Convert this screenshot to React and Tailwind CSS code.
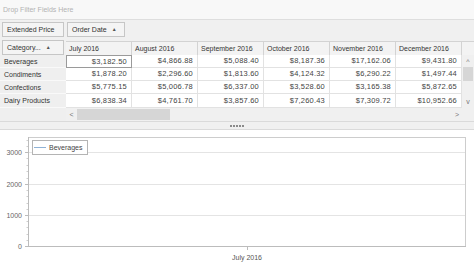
import React from 'react';

const months = ['July 2016', 'August 2016', 'September 2016', 'October 2016', 'November 2016', 'December 2016'];

const rows = [
    { name: 'Beverages', values: ['$3,182.50', '$4,866.88', '$5,088.40', '$8,187.36', '$17,162.06', '$9,431.80'] },
    { name: 'Condiments', values: ['$1,878.20', '$2,296.60', '$1,813.60', '$4,124.32', '$6,290.22', '$1,497.44'] },
    { name: 'Confections', values: ['$5,775.15', '$5,006.78', '$6,337.00', '$3,528.60', '$3,165.38', '$5,872.65'] },
    { name: 'Dairy Products', values: ['$6,838.34', '$4,761.70', '$3,857.60', '$7,260.43', '$7,309.72', '$10,952.66'] },
];

const FieldButton = ({ label, arrow, className = '' }) => (
    <div className={`h-[15px] flex items-center gap-[5px] px-[4px] border border-[#c6c6c6] bg-[#f4f4f4] text-[#333] ${className}`}>
        <span>{label}</span>
        {arrow && <span className="text-[5px] text-[#555]">▲</span>}
    </div>
);

const Chart = () => {
    const major = [
        { y: 22, label: '3000' },
        { y: 54, label: '2000' },
        { y: 85, label: '1000' },
        { y: 116, label: '0' },
    ];
    const minor = [];
    for (let i = 0; i < 3; i++) {
        const top = major[i].y;
        const bottom = major[i + 1].y;
        for (let k = 1; k < 5; k++) minor.push(top + ((bottom - top) * k) / 5);
    }
    for (let k = 1; k < 3; k++) minor.push(22 - (31 / 5) * k);

    return (
        <svg width="474" height="136" className="block">
            <rect x="28.5" y="7.5" width="437" height="109" fill="#fff" stroke="#cdcdcd" />
            {major.slice(0, 3).map((m) => (
                <line key={m.y} x1="29" x2="465" y1={m.y + 0.5} y2={m.y + 0.5} stroke="#e4e4e4" />
            ))}
            <line x1="28.5" x2="28.5" y1="7" y2="117" stroke="#bcbcbc" />
            <line x1="28" x2="466" y1="116.5" y2="116.5" stroke="#bcbcbc" />
            {major.map((m) => (
                <line key={'t' + m.y} x1="25" x2="28" y1={m.y + 0.5} y2={m.y + 0.5} stroke="#bcbcbc" />
            ))}
            {minor.map((y, i) => (
                <line key={'m' + i} x1="26.5" x2="28" y1={Math.round(y) + 0.5} y2={Math.round(y) + 0.5} stroke="#cfcfcf" />
            ))}
            {major.map((m) => (
                <text key={'l' + m.y} x="22" y={m.y + 2.5} textAnchor="end" fontSize="7" fill="#666" fontFamily="'Liberation Sans', sans-serif">
                    {m.label}
                </text>
            ))}
            <line x1="247.5" x2="247.5" y1="117" y2="120" stroke="#bcbcbc" />
            <text x="247" y="130" textAnchor="middle" fontSize="7" fill="#555" fontFamily="'Liberation Sans', sans-serif">
                July 2016
            </text>
            <rect x="32.5" y="10.5" width="55" height="14" fill="#fff" stroke="#b4b4b4" />
            <line x1="34" x2="46" y1="17.5" y2="17.5" stroke="#8fb2d6" />
            <text x="49" y="20" fontSize="7" fill="#444" fontFamily="'Liberation Sans', sans-serif">
                Beverages
            </text>
        </svg>
    );
};

export default function App() {
    return (
        <div className="w-[474px] h-[266px] overflow-hidden bg-white text-[7px] leading-none text-[#333] font-['Liberation_Sans',_Arial,_sans-serif]">
            {/* Filter area */}
            <div className="h-[20px] bg-[#f8f8f8] border-b border-[#dedede] flex items-center pl-[3px] text-[#b3b3b3]">
                Drop Filter Fields Here
            </div>

            {/* Data + column fields */}
            <div className="h-[19px] bg-[#f0f0f0] flex items-start pt-[2px] pl-[2px] gap-[3px]">
                <FieldButton label="Extended Price" className="w-[62px]" />
                <FieldButton label="Order Date" arrow className="w-[58px]" />
            </div>

            {/* Header row */}
            <div className="h-[16px] flex bg-[#f0f0f0]">
                <div className="w-[66px] pl-[2px] pt-[1px]">
                    <FieldButton label="Category..." arrow className="w-[62px]" />
                </div>
                {months.map((m) => (
                    <div key={m} className="w-[66px] mt-[2px] h-[14px] flex items-center pl-[3px] bg-[#f3f3f3] border-t border-r border-[#d3d3d3] first:border-l">
                        {m}
                    </div>
                ))}
                <div className="flex-1 mt-[2px] h-[14px] bg-[#f3f3f3] border-t border-[#d3d3d3]" />
            </div>

            {/* Body */}
            <div className="flex">
                <div className="w-[462px]">
                    {rows.map((r, ri) => (
                        <div key={r.name} className={`flex ${ri === 3 ? 'h-[14px]' : 'h-[13px]'}`}>
                            <div className="w-[66px] bg-[#efefef] border-b border-[#f9f9f9] flex items-center pl-[4px]">
                                {r.name}
                            </div>
                            {r.values.map((v, ci) => (
                                <div
                                    key={ci}
                                    className={`w-[66px] flex items-center justify-end pr-[4px] text-[7.5px] tracking-[0.2px] text-[#444] border-b border-r ${
                                        ri === 0 && ci === 0 ? 'border-[#9a9a9a] border-l border-t' : 'border-[#e2e2e2]'
                                    }`}
                                >
                                    {v}
                                </div>
                            ))}
                        </div>
                    ))}
                    {/* Horizontal scrollbar */}
                    <div className="h-[13px] flex">
                        <div className="w-[66px] bg-[#efefef]" />
                        <div className="flex-1 bg-[#f0f0f0] flex items-center">
                            <span className="w-[11px] text-center text-[7px] text-[#777]">&lt;</span>
                            <div className="w-[93px] h-[11px] bg-[#d6d6d6]" />
                            <div className="flex-1" />
                            <span className="w-[10px] text-center text-[7px] text-[#777]">&gt;</span>
                        </div>
                    </div>
                </div>
                {/* Vertical scrollbar */}
                <div className="w-[12px] bg-[#f0f0f0] flex flex-col items-center">
                    <span className="h-[12px] flex items-center text-[7px] text-[#777]">^</span>
                    <div className="w-[10px] h-[14px] bg-[#d6d6d6]" />
                    <div className="flex-1" />
                    <span className="h-[14px] flex items-center text-[7px] text-[#777]">v</span>
                    <div className="h-[13px]" />
                </div>
            </div>

            {/* Splitter */}
            <div className="h-[9px] bg-[#f0f0f0] border-t border-b border-[#dadada] flex items-center justify-center">
                <div className="flex gap-[1px]">
                    {[0, 1, 2, 3, 4].map((i) => (
                        <div key={i} className="w-[2px] h-[2px] bg-[#8a8a8a]" />
                    ))}
                </div>
            </div>

            <Chart />
        </div>
    );
}
